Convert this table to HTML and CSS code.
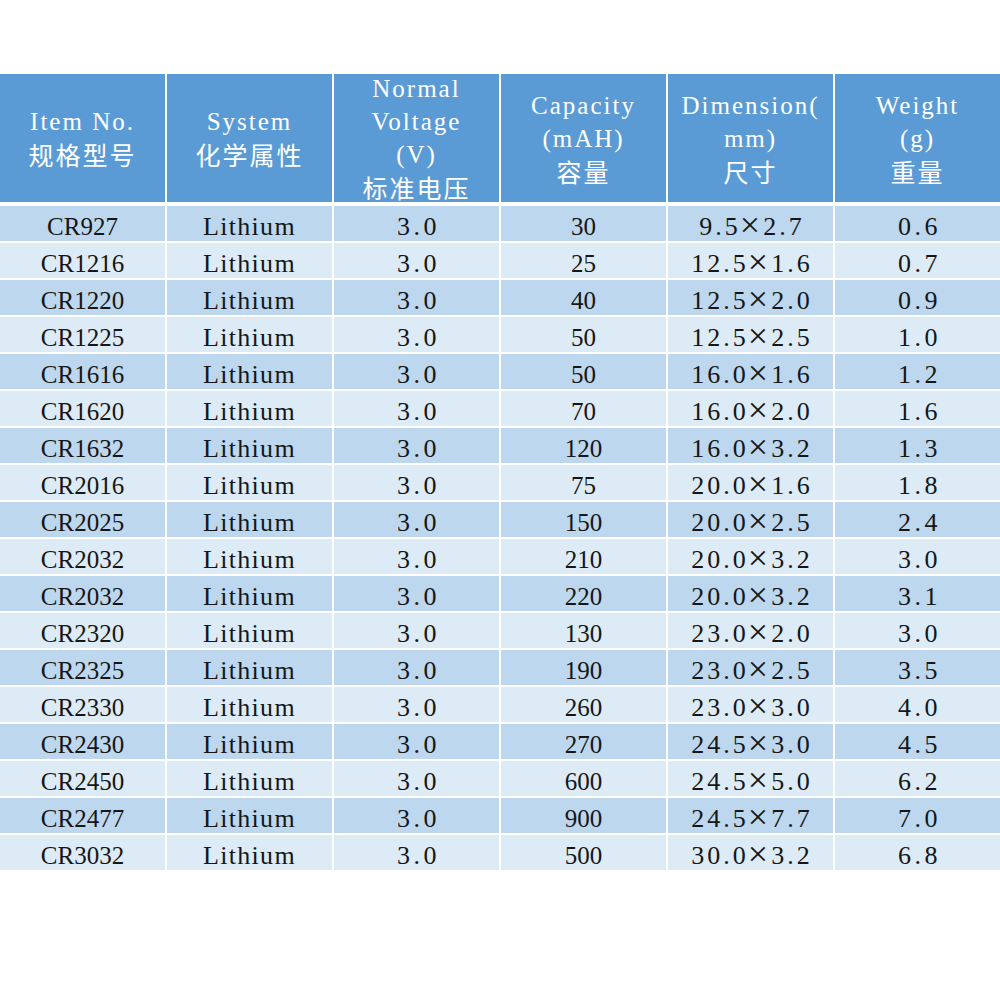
FILE: index.html
```html
<!DOCTYPE html>
<html lang="en">
<head>
<meta charset="utf-8">
<title>CR Battery Specs</title>
<link rel="stylesheet" href="styles.css">
</head>
<body>
<div class="table">
  <div class="hd">Item No.<br><span class="cn">规格型号</span></div>
  <div class="hd">System<br><span class="cn">化学属性</span></div>
  <div class="hd">Normal<br>Voltage<br>(V)<br><span class="cn">标准电压</span></div>
  <div class="hd">Capacity<br>(mAH)<br><span class="cn">容量</span></div>
  <div class="hd">Dimension(<br>mm)<br><span class="cn">尺寸</span></div>
  <div class="hd">Weight<br>(g)<br><span class="cn">重量</span></div>

  <div class="c d">CR927</div><div class="c d li">Lithium</div><div class="c d mn">3.0</div><div class="c d">30</div><div class="c d dm">9.5<span class="x">×</span>2.7</div><div class="c d mn">0.6</div>
  <div class="c l">CR1216</div><div class="c l li">Lithium</div><div class="c l mn">3.0</div><div class="c l">25</div><div class="c l dm">12.5<span class="x">×</span>1.6</div><div class="c l mn">0.7</div>
  <div class="c d">CR1220</div><div class="c d li">Lithium</div><div class="c d mn">3.0</div><div class="c d">40</div><div class="c d dm">12.5<span class="x">×</span>2.0</div><div class="c d mn">0.9</div>
  <div class="c l">CR1225</div><div class="c l li">Lithium</div><div class="c l mn">3.0</div><div class="c l">50</div><div class="c l dm">12.5<span class="x">×</span>2.5</div><div class="c l mn">1.0</div>
  <div class="c d">CR1616</div><div class="c d li">Lithium</div><div class="c d mn">3.0</div><div class="c d">50</div><div class="c d dm">16.0<span class="x">×</span>1.6</div><div class="c d mn">1.2</div>
  <div class="c l">CR1620</div><div class="c l li">Lithium</div><div class="c l mn">3.0</div><div class="c l">70</div><div class="c l dm">16.0<span class="x">×</span>2.0</div><div class="c l mn">1.6</div>
  <div class="c d">CR1632</div><div class="c d li">Lithium</div><div class="c d mn">3.0</div><div class="c d">120</div><div class="c d dm">16.0<span class="x">×</span>3.2</div><div class="c d mn">1.3</div>
  <div class="c l">CR2016</div><div class="c l li">Lithium</div><div class="c l mn">3.0</div><div class="c l">75</div><div class="c l dm">20.0<span class="x">×</span>1.6</div><div class="c l mn">1.8</div>
  <div class="c d">CR2025</div><div class="c d li">Lithium</div><div class="c d mn">3.0</div><div class="c d">150</div><div class="c d dm">20.0<span class="x">×</span>2.5</div><div class="c d mn">2.4</div>
  <div class="c l">CR2032</div><div class="c l li">Lithium</div><div class="c l mn">3.0</div><div class="c l">210</div><div class="c l dm">20.0<span class="x">×</span>3.2</div><div class="c l mn">3.0</div>
  <div class="c d">CR2032</div><div class="c d li">Lithium</div><div class="c d mn">3.0</div><div class="c d">220</div><div class="c d dm">20.0<span class="x">×</span>3.2</div><div class="c d mn">3.1</div>
  <div class="c l">CR2320</div><div class="c l li">Lithium</div><div class="c l mn">3.0</div><div class="c l">130</div><div class="c l dm">23.0<span class="x">×</span>2.0</div><div class="c l mn">3.0</div>
  <div class="c d">CR2325</div><div class="c d li">Lithium</div><div class="c d mn">3.0</div><div class="c d">190</div><div class="c d dm">23.0<span class="x">×</span>2.5</div><div class="c d mn">3.5</div>
  <div class="c l">CR2330</div><div class="c l li">Lithium</div><div class="c l mn">3.0</div><div class="c l">260</div><div class="c l dm">23.0<span class="x">×</span>3.0</div><div class="c l mn">4.0</div>
  <div class="c d">CR2430</div><div class="c d li">Lithium</div><div class="c d mn">3.0</div><div class="c d">270</div><div class="c d dm">24.5<span class="x">×</span>3.0</div><div class="c d mn">4.5</div>
  <div class="c l">CR2450</div><div class="c l li">Lithium</div><div class="c l mn">3.0</div><div class="c l">600</div><div class="c l dm">24.5<span class="x">×</span>5.0</div><div class="c l mn">6.2</div>
  <div class="c d">CR2477</div><div class="c d li">Lithium</div><div class="c d mn">3.0</div><div class="c d">900</div><div class="c d dm">24.5<span class="x">×</span>7.7</div><div class="c d mn">7.0</div>
  <div class="c l">CR3032</div><div class="c l li">Lithium</div><div class="c l mn">3.0</div><div class="c l">500</div><div class="c l dm">30.0<span class="x">×</span>3.2</div><div class="c l mn">6.8</div>
</div>
</body>
</html>
```
FILE: styles.css
```css
html, body {
  margin: 0;
  padding: 0;
  background: #ffffff;
}
body {
  padding-top: 74px;
  font-family: "Liberation Serif", "Noto Sans CJK SC", serif;
}
.table {
  display: grid;
  grid-template-columns: repeat(6, 1fr);
  grid-template-rows: 130px repeat(18, 35px);
  gap: 2px;
  background: #ffffff;
  width: 1000px;
}
.hd {
  background: #5b9bd5;
  color: #ffffff;
  font-size: 25px;
  line-height: 33px;
  letter-spacing: 2px;
  margin-bottom: 2px;
  display: flex;
  align-items: center;
  justify-content: center;
  text-align: center;
  flex-direction: column;
}
.hd .cn {
  font-family: "Noto Sans CJK SC", sans-serif;
  font-size: 25px;
  letter-spacing: 2px;
}
.c {
  display: flex;
  align-items: center;
  justify-content: center;
  font-size: 25px;
  color: #161616;
  padding-top: 6px;
  box-sizing: border-box;
}
.d { background: #bdd7ee; }
.l { background: #ddebf7; }
.li { font-size: 26px; letter-spacing: 1.3px; }
.mn { font-size: 26px; letter-spacing: 3.5px; padding-left: 4px; }
.dm { font-size: 26px; letter-spacing: 3px; padding-left: 3px; }
.x {
  font-size: 36px;
  line-height: 0;
  letter-spacing: 0;
  margin: 0 3px 0 -1px;
  position: relative;
  top: -2px;
}
```
